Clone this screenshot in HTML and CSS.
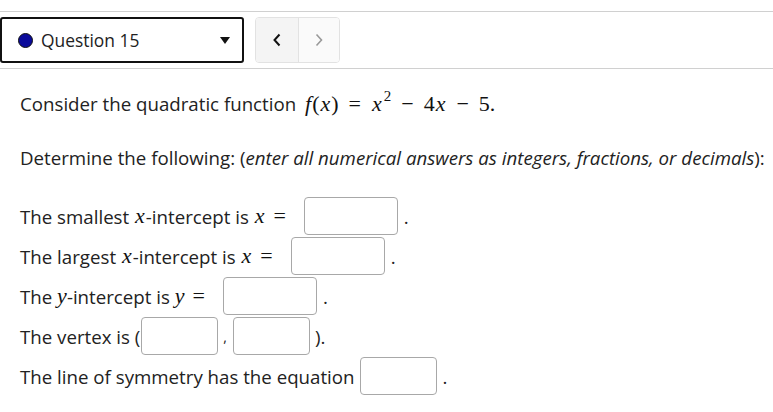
FILE: index.html
```html
<!DOCTYPE html>
<html>
<head>
<meta charset="utf-8">
<link rel="stylesheet" href="styles.css">
</head>
<body>
<div class="header">
  <div class="select">
    <span class="dot"></span>
    <span class="qlabel">Question 15</span>
    <span class="caret"></span>
  </div>
  <div class="nav">
    <button class="navbtn prev">
      <svg width="10" height="14" viewBox="0 0 10 14"><path d="M7.5 1.5 L2.5 7 L7.5 12.5" fill="none" stroke="#111" stroke-width="2"/></svg>
    </button>
    <button class="navbtn next">
      <svg width="10" height="14" viewBox="0 0 10 14"><path d="M2.5 1.5 L7.5 7 L2.5 12.5" fill="none" stroke="#999" stroke-width="1.6"/></svg>
    </button>
  </div>
</div>
<div class="content">
  <p class="intro">Consider the quadratic function <span class="m"><i class="v">f</i>(<i class="v">x</i>)<span class="op">=</span><i class="v">x</i><sup>2</sup><span class="op">−</span>4<i class="v">x</i><span class="op">−</span>5.</span></p>
  <p class="instr">Determine the following: (<em>enter all numerical answers as integers, fractions, or decimals</em>):</p>
  <div class="row">The smallest&nbsp;<span class="m"><i class="v">x</i></span>-intercept is&nbsp;<span class="m"><i class="v">x</i><span class="op">=</span></span><span class="box w93"></span><span class="end">.</span></div>
  <div class="row">The largest&nbsp;<span class="m"><i class="v">x</i></span>-intercept is&nbsp;<span class="m"><i class="v">x</i><span class="op">=</span></span><span class="box w93"></span><span class="end">.</span></div>
  <div class="row">The&nbsp;<span class="m"><i class="v y">y</i></span>-intercept is&nbsp;<span class="m"><i class="v y">y</i><span class="op">=</span></span><span class="box w93"></span><span class="end">.</span></div>
  <div class="row">The vertex is (<span class="box w77 tight"></span><span class="comma">,</span><span class="box w77 tight"></span><span class="close">).</span></div>
  <div class="row">The line of symmetry has the equation<span class="box w77 near"></span><span class="end">.</span></div>
</div>
</body>
</html>
```
FILE: styles.css
```css
html, body {
  margin: 0;
  padding: 0;
  background: #fff;
}
body {
  font-family: "Open Sans", "Liberation Sans", sans-serif;
  color: #222;
  width: 773px;
}
.header {
  margin-top: 11px;
  border-top: 1px solid #d0d0d0;
  border-bottom: 1px solid #d0d0d0;
  padding: 5px 0 5px 0;
  display: flex;
  align-items: center;
  gap: 11px;
}
.select {
  box-sizing: border-box;
  width: 244px;
  height: 46px;
  border: 2px solid #111;
  border-radius: 3px;
  display: flex;
  align-items: center;
  padding-left: 16px;
  padding-right: 12px;
}
.dot {
  width: 15px;
  height: 15px;
  border-radius: 50%;
  background: #0a0a9a;
  border: 1px solid #111;
  box-sizing: border-box;
  margin-right: 8px;
}
.qlabel {
  font-size: 17.4px;
  color: #222;
  flex: 1;
}
.caret {
  width: 0;
  height: 0;
  border-left: 5px solid transparent;
  border-right: 5px solid transparent;
  border-top: 7px solid #111;
}
.nav {
  display: flex;
  height: 46px;
  box-sizing: border-box;
  border: 1px solid #e2e2e2;
  border-radius: 4px;
  overflow: hidden;
}
.navbtn {
  height: 100%;
  border: none;
  margin: 0;
  padding: 0;
  display: flex;
  align-items: center;
  justify-content: center;
}
.prev {
  width: 43px;
  background: #f4f4f4;
  border-right: 1px solid #e2e2e2;
}
.next {
  width: 40px;
  background: #fafafa;
}
.content {
  padding-left: 20px;
  font-size: 18.7px;
}
.intro {
  margin: 22px 0 0 0;
  line-height: 26px;
}
.instr {
  margin: 28px 0 0 0;
  line-height: 26px;
}
.m {
  font-family: "Liberation Serif", "DejaVu Serif", serif;
  font-size: 22px;
  color: #111;
}
.m i.v {
  font-style: italic;
  padding: 0 1px;
}
.m i.y {
  padding: 0;
}
.m sup {
  font-size: 15px;
  vertical-align: 10px;
  line-height: 0;
  margin-left: 1px;
}
.intro .m {
  margin-left: 3px;
}
.op {
  margin: 0 8px;
}
.intro .op {
  margin: 0 10px;
}
.row {
  display: flex;
  align-items: center;
  height: 38px;
  margin-top: 2px;
  white-space: pre;
}
.instr + .row {
  margin-top: 26px;
}
.box {
  box-sizing: border-box;
  height: 38px;
  border: 1px solid #a8a8a8;
  border-radius: 4px;
  margin-left: 10px;
  background: #fff;
}
.box.tight {
  margin-left: 1px;
}
.box.near {
  margin-left: 5px;
}
.row .m + .box {
  margin-left: 10px;
}
.w93 { width: 94px; }
.w77 { width: 77px; }
.end {
  margin-left: 6px;
}
.comma {
  margin: 0 5px;
  font-size: 14px;
}
.close {
  margin-left: 5px;
}
```
